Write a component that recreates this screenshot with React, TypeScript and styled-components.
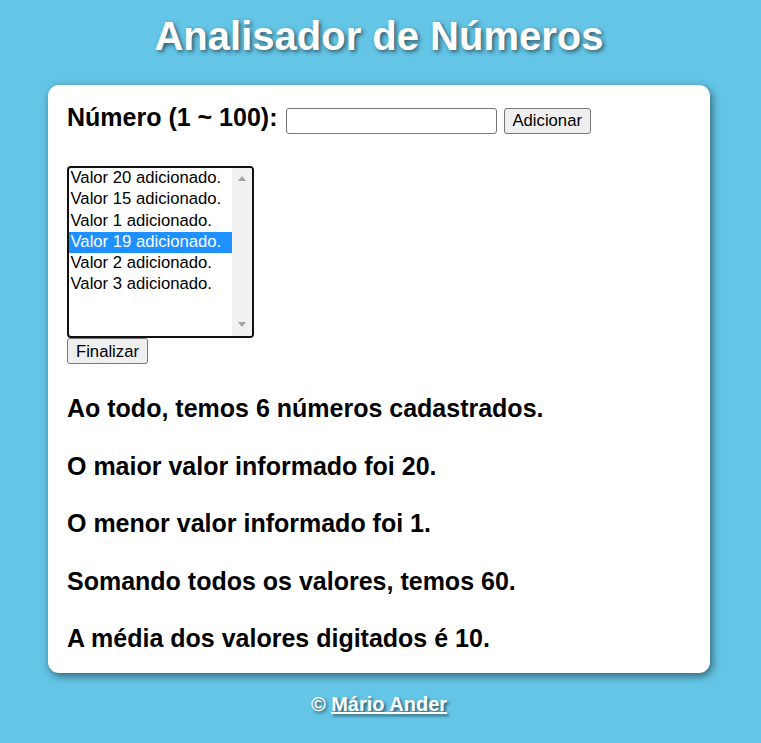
import React from "react";
import styled, { createGlobalStyle } from "styled-components";

const values = [20, 15, 1, 19, 2, 3];
const selectedValue = 19;

const results = [
  "Ao todo, temos 6 números cadastrados.",
  "O maior valor informado foi 20.",
  "O menor valor informado foi 1.",
  "Somando todos os valores, temos 60.",
  "A média dos valores digitados é 10.",
];

const GlobalStyle = createGlobalStyle`
  html, body {
    margin: 0;
    padding: 0;
  }
  body {
    background: #64c5e7;
    font-family: "Liberation Sans", Arial, sans-serif;
    color: #000;
  }
`;

const Page = styled.div`
  min-height: 743px;
  padding-right: 3px;
  display: flex;
  flex-direction: column;
  align-items: center;
`;

const Title = styled.h1`
  margin: 13px 0 0;
  font-size: 40px;
  line-height: 46px;
  font-weight: bold;
  color: #fff;
  text-shadow: 2px 2px 4px rgba(0, 0, 0, 0.55);
`;

const Card = styled.main`
  box-sizing: border-box;
  width: 662px;
  margin-top: 26px;
  padding: 18px 19px 20px;
  background: #fff;
  border-radius: 11px;
  box-shadow: 2px 3px 8px rgba(0, 0, 0, 0.5);
`;

const InputRow = styled.div`
  display: flex;
  align-items: baseline;
`;

const Label = styled.label`
  font-size: 25px;
  font-weight: bold;
  margin-right: 8px;
`;

const NumberInput = styled.input`
  box-sizing: border-box;
  width: 211px;
  height: 26px;
  margin: 0 7px 0 0;
  padding: 1px 3px;
  border: 1px solid #767676;
  border-radius: 3px;
  font-family: "Liberation Sans", Arial, sans-serif;
  font-size: 16.67px;
`;

const Button = styled.button<{ $block?: boolean }>`
  display: ${(p) => (p.$block ? "block" : "inline-block")};
  box-sizing: border-box;
  height: 26px;
  margin: 0;
  padding: 0 8px;
  background: #efefef;
  border: 1px solid #767676;
  border-radius: 3px;
  font-family: "Liberation Sans", Arial, sans-serif;
  font-size: 16.67px;
  line-height: 19px;
  color: #000;
`;

const ListBox = styled.div`
  box-sizing: border-box;
  width: 187px;
  height: 172px;
  margin-top: 32px;
  display: flex;
  border: 2px solid #111;
  border-radius: 4px;
  overflow: hidden;
`;

const OptionList = styled.div`
  flex: 1;
  display: flex;
  flex-direction: column;
`;

const Option = styled.div<{ $selected?: boolean }>`
  height: 21.3px;
  padding-left: 1.5px;
  font-size: 16.67px;
  line-height: 20px;
  white-space: nowrap;
  color: ${(p) => (p.$selected ? "#fff" : "#000")};
  background: ${(p) => (p.$selected ? "#1e90ff" : "transparent")};
`;

const ScrollTrack = styled.div`
  width: 20px;
  background: #f1f1f1;
  display: flex;
  flex-direction: column;
  justify-content: space-between;
  align-items: center;
  padding: 8px 0 9px;
`;

const Arrow = styled.span<{ $down?: boolean }>`
  width: 0;
  height: 0;
  border-left: 4.5px solid transparent;
  border-right: 4.5px solid transparent;
  ${(p) =>
    p.$down
      ? "border-top: 5px solid #a3a3a3;"
      : "border-bottom: 5px solid #a3a3a3;"}
`;

const Results = styled.section`
  margin-top: 30px;
  display: flex;
  flex-direction: column;
  gap: 28.75px;
`;

const ResultLine = styled.p`
  margin: 0;
  font-size: 25px;
  font-weight: bold;
  line-height: 28.75px;
`;

const Footer = styled.footer`
  margin-top: 20px;
  font-size: 20px;
  line-height: 23px;
  font-weight: bold;
  color: #fff;
  text-shadow: 2px 2px 3px rgba(0, 0, 0, 0.55);
`;

const FooterLink = styled.a`
  color: #fff;
  text-decoration: underline;
`;

export default function App() {
  return (
    <>
      <GlobalStyle />
      <Page>
        <Title>Analisador de Números</Title>
        <Card>
          <InputRow>
            <Label htmlFor="num">Número (1 ~ 100):</Label>
            <NumberInput id="num" type="number" />
            <Button>Adicionar</Button>
          </InputRow>
          <ListBox role="listbox">
            <OptionList>
              {values.map((v) => (
                <Option key={v} role="option" $selected={v === selectedValue}>
                  Valor {v} adicionado.
                </Option>
              ))}
            </OptionList>
            <ScrollTrack>
              <Arrow />
              <Arrow $down />
            </ScrollTrack>
          </ListBox>
          <Button $block>Finalizar</Button>
          <Results>
            {results.map((line) => (
              <ResultLine key={line}>{line}</ResultLine>
            ))}
          </Results>
        </Card>
        <Footer>
          © <FooterLink href="#">Mário Ander</FooterLink>
        </Footer>
      </Page>
    </>
  );
}
